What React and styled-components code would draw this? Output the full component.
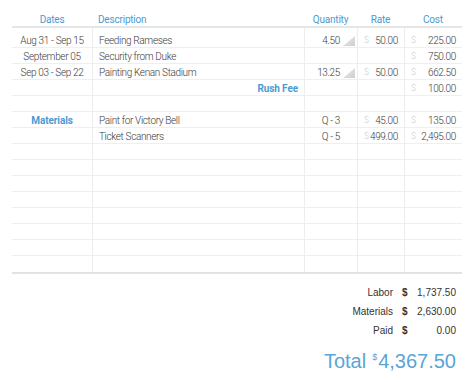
import React from "react";
import styled, { createGlobalStyle } from "styled-components";

const GlobalStyle = createGlobalStyle`
  body {
    margin: 0;
    background: #fff;
    font-family: Roboto, "Liberation Sans", Arial, sans-serif;
    color: #444;
  }
`;

const COLS = "80px 212px 53px 47px 58px";

const Page = styled.div`
  width: 474px;
  height: 382px;
  padding: 11px 12px 0;
  box-sizing: border-box;
`;

const HeaderRow = styled.div`
  display: grid;
  grid-template-columns: ${COLS};
  height: 17px;
  padding-top: 1px;
  box-sizing: border-box;
  align-items: center;
  border-bottom: 2px solid #e6e6e6;
`;

const HeadCell = styled.div`
  font-size: 10px;
  letter-spacing: -0.2px;
  color: #4a9bd1;
  text-align: ${(p) => p.$align || "center"};
  padding-left: ${(p) => (p.$align === "left" ? "6px" : "0")};
`;

const Body = styled.div`
  border-bottom: 2px solid #e2e2e2;
`;

const Row = styled.div`
  display: grid;
  grid-template-columns: ${COLS};
  height: ${(p) => (p.$first ? "20px" : "16px")};
  box-sizing: border-box;
  border-bottom: ${(p) => (p.$last ? "none" : "1px solid #efefef")};
`;

const Cell = styled.div`
  display: flex;
  align-items: center;
  justify-content: ${(p) => p.$justify || "flex-start"};
  padding: ${(p) => (p.$first ? "5px" : "1px")} 6px 0;
  border-left: ${(p) => (p.$divider ? "1px solid #ededed" : "none")};
  font-size: 10px;
  font-weight: 300;
  letter-spacing: -0.35px;
  color: #3a3a3a;
  white-space: nowrap;
  overflow: hidden;
`;

const Label = styled.span`
  font-weight: 700;
  letter-spacing: -0.1px;
  color: #4a9bd1;
`;

const Money = styled.span`
  display: flex;
  width: 100%;
  justify-content: space-between;
  align-items: center;
`;

const Dollar = styled.span`
  color: #cdcdcd;
  font-size: 9px;
`;

const Grip = styled.svg`
  width: 12px;
  height: 10px;
  margin: 2px -4px 0 3px;
  flex-shrink: 0;
`;

const Summary = styled.div`
  display: flex;
  flex-direction: column;
  align-items: flex-end;
  padding: 9px 6px 0 0;
  font-family: "Liberation Sans", Arial, sans-serif;
`;

const SumGrid = styled.div`
  display: grid;
  grid-template-columns: auto 7px 41px;
  column-gap: 6px;
  grid-auto-rows: 19px;
  align-items: center;
  font-size: 10px;
  color: #333;
`;

const SumLabel = styled.span`
  text-align: right;
  margin-right: 3px;
`;

const SumDollar = styled.span`
  font-weight: 700;
`;

const SumValue = styled.span`
  text-align: right;
`;

const Total = styled.div`
  margin-top: 5px;
  line-height: 24px;
  font-size: 20px;
  color: #58a5d8;
`;

const TotalDollar = styled.sup`
  font-size: 9px;
  margin: 0 1px 0 6px;
  vertical-align: 8px;
`;

const GripIcon = () => (
  <Grip viewBox="0 0 12 10">
    <defs>
      <linearGradient id="g" x1="0" y1="0" x2="1" y2="1">
        <stop offset="0" stopColor="#ebebeb" />
        <stop offset="1" stopColor="#cfcfcf" />
      </linearGradient>
    </defs>
    <polygon points="0,10 12,10 12,0" fill="url(#g)" />
  </Grip>
);

const rows = [
  { date: "Aug 31 - Sep 15", desc: "Feeding Rameses", qty: "4.50", grip: true, rate: "50.00", cost: "225.00" },
  { date: "September 05", desc: "Security from Duke", cost: "750.00" },
  { date: "Sep 03 - Sep 22", desc: "Painting Kenan Stadium", qty: "13.25", grip: true, rate: "50.00", cost: "662.50" },
  { rush: true, cost: "100.00" },
  {},
  { label: "Materials", desc: "Paint for Victory Bell", qty: "Q - 3", rate: "45.00", cost: "135.00" },
  { desc: "Ticket Scanners", qty: "Q - 5", rate: "499.00", cost: "2,495.00" },
  {}, {}, {}, {}, {}, {}, {}, {},
];

export default function App() {
  return (
    <>
      <GlobalStyle />
      <Page>
        <HeaderRow>
          <HeadCell>Dates</HeadCell>
          <HeadCell $align="left">Description</HeadCell>
          <HeadCell>Quantity</HeadCell>
          <HeadCell>Rate</HeadCell>
          <HeadCell>Cost</HeadCell>
        </HeaderRow>
        <Body>
          {rows.map((r, i) => {
            const first = i === 0;
            return (
              <Row key={i} $first={first} $last={i === rows.length - 1}>
                <Cell $first={first} $justify="center">
                  {r.label ? <Label>{r.label}</Label> : r.date}
                </Cell>
                <Cell $first={first} $divider $justify={r.rush ? "flex-end" : "flex-start"}>
                  {r.rush ? <Label>Rush Fee</Label> : r.desc}
                </Cell>
                <Cell $first={first} $divider $justify="flex-end">
                  {r.qty}
                  {r.grip && <GripIcon />}
                  {r.qty && !r.grip && <span style={{ width: 11 }} />}
                </Cell>
                <Cell $first={first} $divider>
                  {r.rate && (
                    <Money>
                      <Dollar>$</Dollar>
                      {r.rate}
                    </Money>
                  )}
                </Cell>
                <Cell $first={first} $divider>
                  {r.cost && (
                    <Money>
                      <Dollar>$</Dollar>
                      {r.cost}
                    </Money>
                  )}
                </Cell>
              </Row>
            );
          })}
        </Body>
        <Summary>
          <SumGrid>
            <SumLabel>Labor</SumLabel>
            <SumDollar>$</SumDollar>
            <SumValue>1,737.50</SumValue>
            <SumLabel>Materials</SumLabel>
            <SumDollar>$</SumDollar>
            <SumValue>2,630.00</SumValue>
            <SumLabel>Paid</SumLabel>
            <SumDollar>$</SumDollar>
            <SumValue>0.00</SumValue>
          </SumGrid>
          <Total>
            Total<TotalDollar>$</TotalDollar>4,367.50
          </Total>
        </Summary>
      </Page>
    </>
  );
}
